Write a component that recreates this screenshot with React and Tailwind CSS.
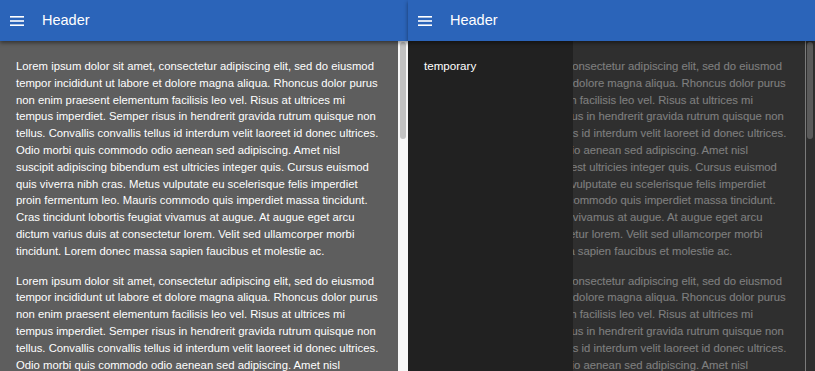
import React from 'react';

const LINES = [
  'Lorem ipsum dolor sit amet, consectetur adipiscing elit, sed do eiusmod',
  'tempor incididunt ut labore et dolore magna aliqua. Rhoncus dolor purus',
  'non enim praesent elementum facilisis leo vel. Risus at ultrices mi',
  'tempus imperdiet. Semper risus in hendrerit gravida rutrum quisque non',
  'tellus. Convallis convallis tellus id interdum velit laoreet id donec ultrices.',
  'Odio morbi quis commodo odio aenean sed adipiscing. Amet nisl',
  'suscipit adipiscing bibendum est ultricies integer quis. Cursus euismod',
  'quis viverra nibh cras. Metus vulputate eu scelerisque felis imperdiet',
  'proin fermentum leo. Mauris commodo quis imperdiet massa tincidunt.',
  'Cras tincidunt lobortis feugiat vivamus at augue. At augue eget arcu',
  'dictum varius duis at consectetur lorem. Velit sed ullamcorper morbi',
  'tincidunt. Lorem donec massa sapien faucibus et molestie ac.',
];

const LOREM = LINES.join('\n');

function MenuIcon() {
  return (
    <svg width="14" height="10" viewBox="0 0 14 10" className="block">
      <rect x="0" y="0" width="14" height="1.6" fill="white" />
      <rect x="0" y="4.2" width="14" height="1.6" fill="white" />
      <rect x="0" y="8.4" width="14" height="1.6" fill="white" />
    </svg>
  );
}

function Header() {
  return (
    <header className="relative z-20 flex h-[41px] shrink-0 items-center bg-[#2b64b9] shadow-[0_2px_4px_rgba(0,0,0,0.45)]">
      <div className="ml-[10px] mr-[18px]">
        <MenuIcon />
      </div>
      <span className="text-[14.5px] leading-none text-white">Header</span>
    </header>
  );
}

function Content() {
  return (
    <div className="flex-1 overflow-hidden bg-[#5e5e5e] pl-4 pr-[16px] pt-[17px]">
      <p className="mb-[13px] whitespace-pre text-[11.3px] leading-[16.8px] text-white">{LOREM}</p>
      <p className="mb-[13px] whitespace-pre text-[11.3px] leading-[16.8px] text-white">{LOREM}</p>
    </div>
  );
}

function Scrollbar() {
  return (
    <div className="flex w-[10px] shrink-0 justify-center bg-[#f7f7f7] pt-[1px]">
      <div className="h-[97px] w-[6px] rounded-full bg-[#c2c2c2]" />
    </div>
  );
}

function Pane({ temporary = false, width }) {
  return (
    <div className={'relative flex h-full flex-col ' + width}>
      <Header />
      <div className="relative flex min-h-0 flex-1">
        <Content />
        <Scrollbar />
        {temporary && (
          <>
            <div className="absolute inset-0 bg-black/50" />
            <div className="absolute inset-y-0 right-0 w-[9px] bg-[#2e2e2e] pl-[1px] pt-[1px]">
              <div className="h-[97px] w-[6px] rounded-full bg-[#5a5a5a]" />
            </div>
            <aside className="absolute inset-y-0 left-0 w-[165px] bg-[#212121] px-4 pt-[12px]">
              <span className="text-[11.6px] leading-[16.8px] text-white">temporary</span>
            </aside>
          </>
        )}
      </div>
    </div>
  );
}

export default function App() {
  return (
    <div
      className="flex h-[371px] w-[815px] overflow-hidden bg-[#f7f7f7]"
      style={{ fontFamily: '"Liberation Sans", Arial, sans-serif' }}
    >
      <Pane width="w-[408px]" />
      <Pane width="w-[407px]" temporary />
    </div>
  );
}
